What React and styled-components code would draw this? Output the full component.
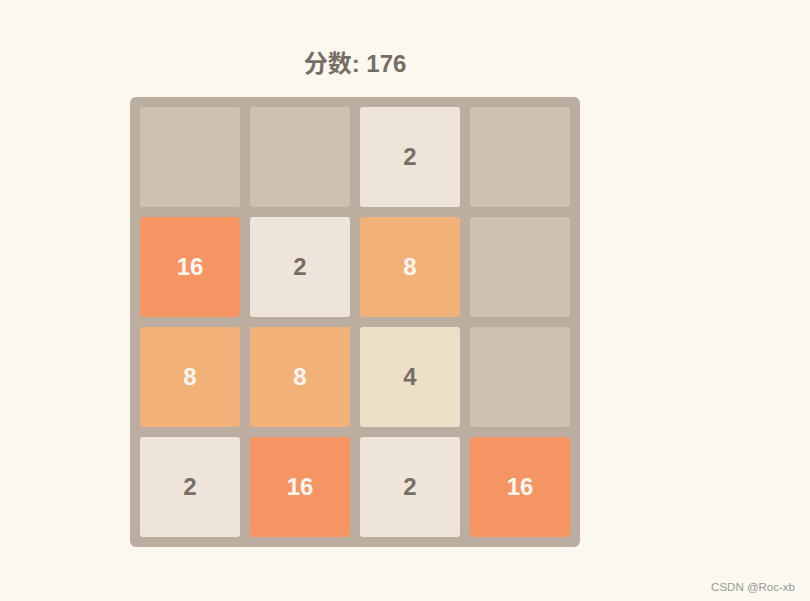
import React from "react";
import styled, { createGlobalStyle } from "styled-components";

const GlobalStyle = createGlobalStyle`
  html, body {
    margin: 0;
    padding: 0;
    background: #faf8ef;
    font-family: "Liberation Sans", Arial, "Noto Sans CJK SC", sans-serif;
  }
`;

const grid = [
  [0, 0, 2, 0],
  [16, 2, 8, 0],
  [8, 8, 4, 0],
  [2, 16, 2, 16],
];

const tileColors = {
  0: { bg: "#cdc1b4", fg: "#776e65" },
  2: { bg: "#eee4da", fg: "#776e65" },
  4: { bg: "#ede0c8", fg: "#776e65" },
  8: { bg: "#f2b179", fg: "#f9f6f2" },
  16: { bg: "#f59563", fg: "#f9f6f2" },
};

const Page = styled.div`
  width: 810px;
  height: 601px;
  position: relative;
  overflow: hidden;
`;

const Game = styled.div`
  width: 450px;
  margin-left: 130px;
  padding-top: 50px;
  display: flex;
  flex-direction: column;
  align-items: center;
`;

const Score = styled.div`
  font-size: 24px;
  font-weight: bold;
  color: #776e65;
  line-height: 28px;
  margin-bottom: 19px;
`;

const Board = styled.div`
  width: 450px;
  box-sizing: border-box;
  padding: 10px;
  background: #bbada0;
  border-radius: 6px;
  display: grid;
  grid-template-columns: repeat(4, 100px);
  grid-auto-rows: 100px;
  gap: 10px;
`;

const Tile = styled.div`
  background: ${(p) => tileColors[p.$value].bg};
  color: ${(p) => tileColors[p.$value].fg};
  border-radius: 3px;
  display: flex;
  align-items: center;
  justify-content: center;
  font-size: 24px;
  font-weight: bold;
`;

const Watermark = styled.div`
  position: absolute;
  right: 15px;
  bottom: 8px;
  font-size: 11.5px;
  color: #999;
`;

export default function App() {
  const score = 176;
  return (
    <Page>
      <GlobalStyle />
      <Game>
        <Score>分数: {score}</Score>
        <Board>
          {grid.flat().map((v, i) => (
            <Tile key={i} $value={v}>
              {v || ""}
            </Tile>
          ))}
        </Board>
      </Game>
      <Watermark>CSDN @Roc-xb</Watermark>
    </Page>
  );
}
